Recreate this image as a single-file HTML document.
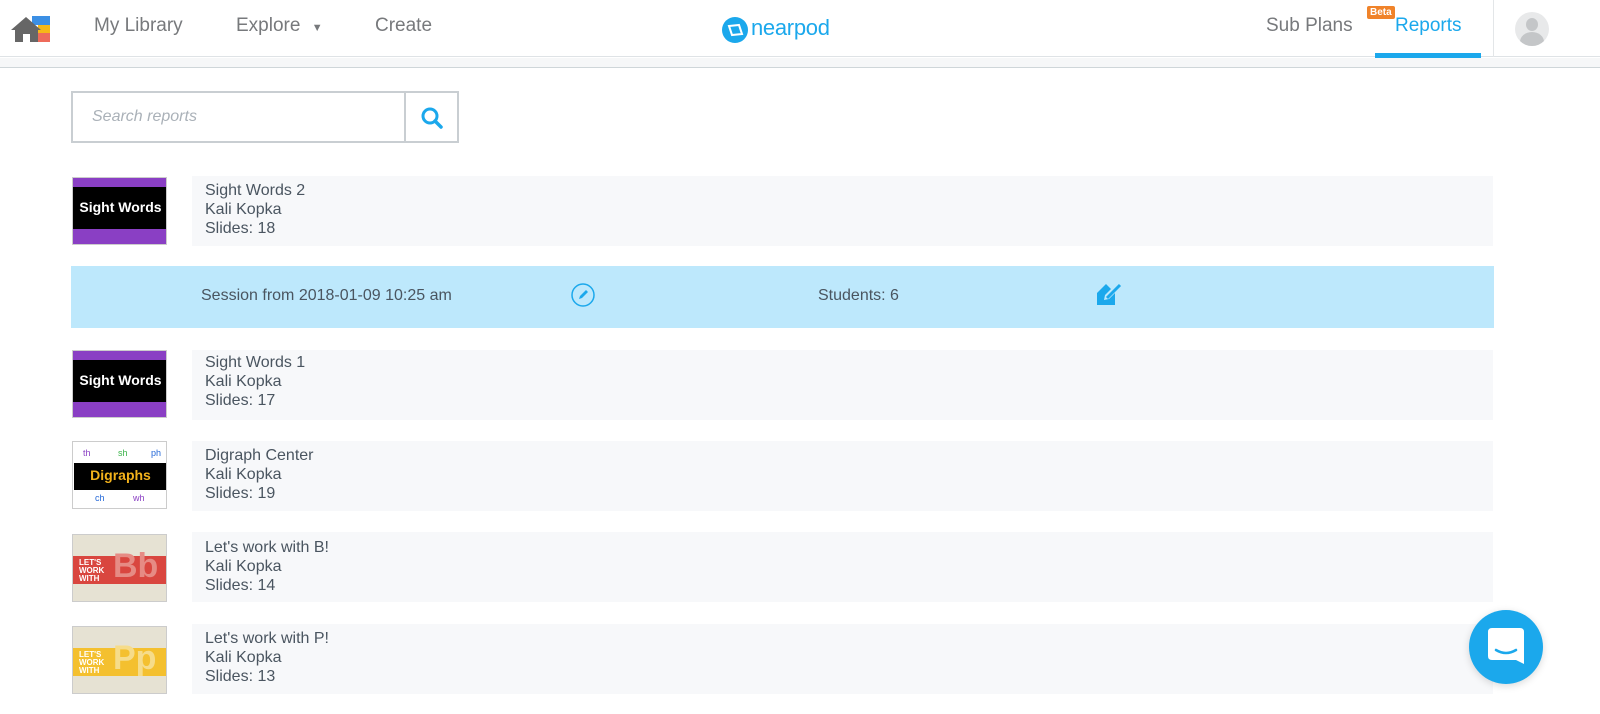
<!DOCTYPE html>
<html><head><style>
*{margin:0;padding:0;box-sizing:border-box}
body{width:1600px;height:714px;overflow:hidden;background:#fff;font-family:"Liberation Sans",sans-serif;position:relative}
.hdr{position:absolute;left:0;top:0;width:1600px;height:57px;border-bottom:1px solid #dfe3e6;background:#fff}
.band{position:absolute;left:0;top:58px;width:1600px;height:10px;background:#f6f7f8;border-bottom:1px solid #cfd6d9}
.nav{position:absolute;top:15px;font-size:19px;color:#77797c}
.search{position:absolute;left:71px;top:91px;width:388px;height:52px;border:2px solid #c9ced2}
.search span{position:absolute;left:19px;top:15px;font-size:16px;font-style:italic;color:#aab1b8}
.search .btn{position:absolute;left:331px;top:0;width:2px;height:48px;background:#c9ced2}
.thumb{position:absolute;left:72px;width:95px;height:68px;border:1px solid #ccc;overflow:hidden}
.info{position:absolute;left:192px;width:1301px;height:70px;background:#f7f8fa;padding:4px 13px;font-size:16px;line-height:19px;color:#4a5560}
.sess{position:absolute;left:71px;top:266px;width:1423px;height:62px;background:#bde8fc;font-size:16px;color:#4a5560}
</style></head><body>
<div class="hdr">
 <svg style="position:absolute;left:10px;top:14px" width="42" height="30" viewBox="0 0 42 30">
  <rect x="22" y="2" width="18" height="9" fill="#3b8fe4"/><rect x="28" y="11" width="12" height="8" fill="#f6b817"/><rect x="28" y="19" width="12" height="9" fill="#ee6b5b"/>
  <path d="M1 16 L16 3 L31 16 L28 16 L28 28 L20 28 L20 20 L13 20 L13 28 L5 28 L5 16 Z" fill="#666"/>
 </svg>
 <div class="nav" style="left:94px">My Library</div>
 <div class="nav" style="left:236px">Explore <span style="font-size:11px;margin-left:6px">▼</span></div>
 <div class="nav" style="left:375px">Create</div>
 <svg style="position:absolute;left:722px;top:17px" width="26" height="26"><circle cx="13" cy="13" r="13" fill="#1ba8ec"/><path d="M7 9 L17 8 L20 17 L10 18 Z" fill="none" stroke="#fff" stroke-width="2"/></svg>
 <div style="position:absolute;left:751px;top:15px;font-size:22px;color:#1ba8ec;letter-spacing:-0.3px">nearpod</div>
 <div class="nav" style="left:1266px">Sub Plans</div>
 <div style="position:absolute;left:1367px;top:6px;background:#f0832a;color:#fff;font-size:10px;font-weight:bold;padding:1px 3px;border-radius:2px">Beta</div>
 <div class="nav" style="left:1395px;color:#1ba8ec">Reports</div>
 <div style="position:absolute;left:1375px;top:53px;width:106px;height:5px;background:#1ba8ec"></div>
 <div style="position:absolute;left:1493px;top:0;width:1px;height:57px;background:#e3e6e8"></div>
 <div style="position:absolute;left:1515px;top:12px;width:34px;height:34px;border-radius:50%;background:#e8e9ea;overflow:hidden">
  <div style="position:absolute;left:11px;top:6px;width:12px;height:13px;border-radius:50%;background:#c4c6c8"></div>
  <div style="position:absolute;left:5px;top:20px;width:24px;height:20px;border-radius:50%;background:#c4c6c8"></div>
 </div>
</div>
<div class="band"></div>
<div class="search"><span>Search reports</span><div class="btn"></div>
 <svg style="position:absolute;left:347px;top:13px" width="24" height="24" viewBox="0 0 24 24"><circle cx="10" cy="10" r="7" fill="none" stroke="#1ba8ec" stroke-width="3"/><path d="M15 15 L21 21" stroke="#1ba8ec" stroke-width="3.5" stroke-linecap="round"/></svg>
</div>

<div class="thumb" style="top:177px;background:#8a3fc4"><div style="position:absolute;top:9px;left:0;width:95px;height:42px;background:#000;color:#fff;font-weight:bold;font-size:14px;text-align:center;padding-top:12px">Sight Words</div></div>
<div class="info" style="top:176px;padding-top:5px">Sight Words 2<br>Kali Kopka<br>Slides: 18</div>

<div class="sess">
 <div style="position:absolute;left:130px;top:21px">Session from 2018-01-09 10:25 am</div>
 <svg style="position:absolute;left:500px;top:17px" width="24" height="24"><circle cx="12" cy="12" r="11" fill="none" stroke="#1ba8ec" stroke-width="1.5"/><path d="M8 16 L9 13 L15 7 L17 9 L11 15 Z" fill="#1ba8ec"/></svg>
 <div style="position:absolute;left:747px;top:21px">Students: 6</div>
 <svg style="position:absolute;left:1024px;top:15px" width="28" height="26"><path d="M2 12 L11 3 L16 8 L10 14 L9 19 L14 18 L20 12 L20 24 L2 24 Z" fill="#1ba8ec"/><path d="M12 17 L25 4" stroke="#1ba8ec" stroke-width="3"/></svg>
</div>

<div class="thumb" style="top:350px;background:#8a3fc4"><div style="position:absolute;top:9px;left:0;width:95px;height:42px;background:#000;color:#fff;font-weight:bold;font-size:14px;text-align:center;padding-top:12px">Sight Words</div></div>
<div class="info" style="top:350px;padding-top:3px">Sight Words 1<br>Kali Kopka<br>Slides: 17</div>

<div class="thumb" style="top:441px;background:#fff"><div style="position:absolute;top:21px;left:1px;width:93px;height:27px;background:#000;color:#f3b21b;font-weight:bold;font-size:14px;text-align:center;padding-top:4px">Digraphs</div>
 <span style="position:absolute;left:10px;top:6px;font-size:9px;color:#8a3fc4">th</span><span style="position:absolute;left:45px;top:6px;font-size:9px;color:#3bb34a">sh</span><span style="position:absolute;left:78px;top:6px;font-size:9px;color:#2468d8">ph</span><span style="position:absolute;left:22px;top:51px;font-size:9px;color:#2468d8">ch</span><span style="position:absolute;left:60px;top:51px;font-size:9px;color:#8a3fc4">wh</span></div>
<div class="info" style="top:441px;padding-top:5px">Digraph Center<br>Kali Kopka<br>Slides: 19</div>

<div class="thumb" style="top:534px;background:#e6e2d3"><div style="position:absolute;top:21px;left:0;width:95px;height:28px;background:#d9463f;color:#fff;font-weight:bold;font-size:8px;padding:3px 6px;line-height:8px">LET'S<br>WORK<br>WITH</div><span style="position:absolute;left:40px;top:12px;font-size:34px;font-weight:bold;color:#e68b84">Bb</span></div>
<div class="info" style="top:532px;padding-top:6px">Let's work with B!<br>Kali Kopka<br>Slides: 14</div>

<div class="thumb" style="top:626px;background:#e6e2d3"><div style="position:absolute;top:21px;left:0;width:95px;height:28px;background:#f4c02f;color:#fff;font-weight:bold;font-size:8px;padding:3px 6px;line-height:8px">LET'S<br>WORK<br>WITH</div><span style="position:absolute;left:40px;top:12px;font-size:34px;font-weight:bold;color:#f6dc8a">Pp</span></div>
<div class="info" style="top:624px;padding-top:5px">Let's work with P!<br>Kali Kopka<br>Slides: 13</div>

<div style="position:absolute;left:1469px;top:610px;width:74px;height:74px;border-radius:50%;background:#1ba8ec;box-shadow:0 2px 8px rgba(0,0,0,.15)">
 <svg style="position:absolute;left:19px;top:18px" width="36" height="38" viewBox="0 0 36 38"><path d="M4 0 H32 Q36 0 36 4 V36 L28 32 H4 Q0 32 0 28 V4 Q0 0 4 0 Z" fill="#fff"/><path d="M8 22 Q18 28 28 22" fill="none" stroke="#1ba8ec" stroke-width="2.5" stroke-linecap="round"/></svg>
</div>
</body></html>
